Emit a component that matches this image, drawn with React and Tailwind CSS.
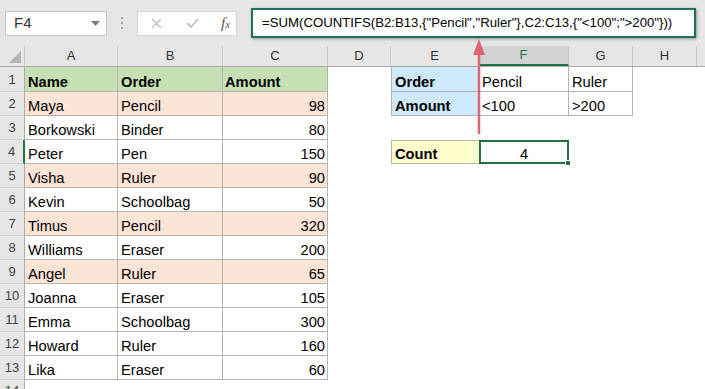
import React from "react";

const font = { fontFamily: '"Liberation Sans", Arial, sans-serif' };

const widths = ["w-[93px]", "w-[105px]", "w-[105px]", "w-[63px]", "w-[88px]", "w-[90px]", "w-[64px]", "w-[64px]"];
const letters = ["A", "B", "C", "D", "E", "F", "G", "H"];
const formula = '=SUM(COUNTIFS(B2:B13,{"Pencil","Ruler"},C2:C13,{"<100";">200"}))';

const people = [
  ["Maya", "Pencil", "98"],
  ["Borkowski", "Binder", "80"],
  ["Peter", "Pen", "150"],
  ["Visha", "Ruler", "90"],
  ["Kevin", "Schoolbag", "50"],
  ["Timus", "Pencil", "320"],
  ["Williams", "Eraser", "200"],
  ["Angel", "Ruler", "65"],
  ["Joanna", "Eraser", "105"],
  ["Emma", "Schoolbag", "300"],
  ["Howard", "Ruler", "160"],
  ["Lika", "Eraser", "60"],
];
const pinkRows = [2, 5, 7, 9];

const Cell = ({ w, className = "", children }) => (
  <div className={`${w} shrink-0 h-full box-border flex items-end overflow-visible whitespace-nowrap ${className}`}>
    {children}
  </div>
);

const grid = "border-r border-b border-[#b4b4b4]";

const Row = ({ n, h }) => {
  const i = n - 1;
  let a = "", b = "", c = "", bg = "bg-white", bold = "";
  if (n === 1) {
    a = "Name"; b = "Order"; c = "Amount"; bg = "bg-[#c6e0b4]"; bold = "font-bold";
  } else {
    [a, b, c] = people[i - 1];
    if (pinkRows.includes(n)) bg = "bg-[#fce4d6]";
  }
  let e = null, f = null, g = null;
  if (n === 1) {
    e = <Cell w={widths[4]} className={`${grid} border-l bg-[#cde9fb] font-bold pl-[3px]`}>Order</Cell>;
    f = <Cell w={widths[5]} className={`${grid} pl-[3px]`}>Pencil</Cell>;
    g = <Cell w={widths[6]} className={`${grid} pl-[3px]`}>Ruler</Cell>;
  } else if (n === 2) {
    e = <Cell w={widths[4]} className={`${grid} border-l bg-[#cde9fb] font-bold pl-[3px]`}>Amount</Cell>;
    f = <Cell w={widths[5]} className={`${grid} pl-[3px]`}>&lt;100</Cell>;
    g = <Cell w={widths[6]} className={`${grid} pl-[3px]`}>&gt;200</Cell>;
  } else if (n === 4) {
    e = <Cell w={widths[4]} className="border border-r-0 border-[#b4b4b4] bg-[#ffffcc] font-bold pl-[3px]">Count</Cell>;
    f = (
      <Cell w={widths[5]} className="relative border-2 border-[#217346] justify-center">
        <span className="-mb-[1px]">4</span>
        <span className="absolute -right-[4px] -bottom-[4px] w-[6px] h-[6px] bg-[#217346] border border-white" />
      </Cell>
    );
    g = <Cell w={widths[6]} />;
  } else {
    e = <Cell w={widths[4]} />;
    f = <Cell w={widths[5]} />;
    g = <Cell w={widths[6]} />;
  }
  return (
    <div className={`flex ${h} text-[14.7px] leading-[17px] text-black`}>
      <div className={`w-[25px] shrink-0 box-border bg-[#e6e6e6] border-b border-[#d0d0d0] border-r ${n === 4 ? "border-r-[#217346] border-r-2" : "border-r-[#ababab]"} flex items-center justify-center text-[13px] text-[#444]`}>
        {n}
      </div>
      <Cell w={widths[0]} className={`${grid} ${bg} ${bold} pl-[3px]`}>{a}</Cell>
      <Cell w={widths[1]} className={`${grid} ${bg} ${bold} pl-[3px]`}>{b}</Cell>
      <Cell w={widths[2]} className={`${grid} ${bg} ${bold} ${n === 1 ? "pl-[2px]" : "justify-end pr-[2px]"}`}>{c}</Cell>
      <Cell w={widths[3]} />
      {e}
      {f}
      {g}
      <Cell w={widths[7]} />
      <div className="flex-1" />
    </div>
  );
};

const FormulaBar = () => (
  <div className="h-[46px] bg-[#e6e6e6] flex items-center">
    <div className="ml-[5px] w-[102px] h-[25px] bg-white border border-[#c6c6c6] box-border flex items-center pl-[8px] pr-[6px] text-[15px] text-[#333]">
      <span className="flex-1">F4</span>
      <svg width="9" height="5" viewBox="0 0 9 5"><path d="M0 0h9L4.5 5z" fill="#7a7a7a" /></svg>
    </div>
    <div className="w-[30px] flex flex-col items-center gap-[3px]">
      <span className="w-[2px] h-[2px] bg-[#a6a6a6]" />
      <span className="w-[2px] h-[2px] bg-[#a6a6a6]" />
      <span className="w-[2px] h-[2px] bg-[#a6a6a6]" />
    </div>
    <div className="w-[100px] h-[25px] bg-white border border-[#d4d4d4] box-border flex items-center">
      <svg className="ml-[13px]" width="11" height="11" viewBox="0 0 11 11">
        <path d="M1 1l9 9M10 1l-9 9" stroke="#c0c0c0" strokeWidth="1.4" fill="none" />
      </svg>
      <svg className="ml-[24px]" width="13" height="10" viewBox="0 0 13 10">
        <path d="M1 5l4 4 7-8" stroke="#c0c0c0" strokeWidth="1.8" fill="none" />
      </svg>
      <span className="ml-[22px] italic text-[15px] text-[#555]" style={{ fontFamily: '"Liberation Serif", serif' }}>
        f<span className="text-[11px]">x</span>
      </span>
    </div>
    <div className="ml-[14px] w-[445px] h-[30px] bg-white border-2 border-[#1f6e5e] box-border shadow-[1px_1px_3px_rgba(0,0,0,0.35)] flex items-center pl-[9px] text-[13.2px] text-black whitespace-nowrap overflow-hidden">
      {formula}
    </div>
  </div>
);

const ColumnHeader = () => (
  <div className="flex h-[20px] bg-[#e6e6e6] border-b border-[#ababab] box-content text-[13px] text-[#333]">
    <div className="w-[25px] shrink-0 relative border-r border-[#c8c8c8]">
      <svg className="absolute right-[3px] bottom-[3px]" width="12" height="12" viewBox="0 0 12 12">
        <path d="M12 0v12H0z" fill="#b4b4b4" />
      </svg>
    </div>
    {letters.map((l, i) => (
      <div
        key={l}
        className={`${widths[i]} shrink-0 box-border flex items-center justify-center border-r border-[#c8c8c8] ${
          l === "F" ? "bg-[#d2d2d2] text-[#217346] border-b-2 border-b-[#217346]" : ""
        }`}
      >
        {l}
      </div>
    ))}
    <div className="flex-1" />
  </div>
);

export default function App() {
  return (
    <div className="w-[705px] h-[389px] overflow-hidden bg-white relative" style={font}>
      <FormulaBar />
      <ColumnHeader />
      <div className="flex flex-col">
        {Array.from({ length: 13 }, (_, k) => (
          <Row key={k} n={k + 1} h={k === 0 ? "h-[25px]" : "h-[24px]"} />
        ))}
        <div className="flex h-[24px]">
          <div className="w-[25px] shrink-0 bg-[#e6e6e6] border-r border-[#ababab] flex items-start justify-center pt-[3px] text-[13px] leading-[15px] text-[#444]">14</div>
        </div>
      </div>
      <svg className="absolute left-[472px] top-[39px]" width="14" height="96" viewBox="0 0 14 96">
        <path d="M7 12V95" stroke="#dc6673" strokeWidth="2.5" />
        <path d="M7 0L13 16H1z" fill="#dc6673" />
      </svg>
    </div>
  );
}
